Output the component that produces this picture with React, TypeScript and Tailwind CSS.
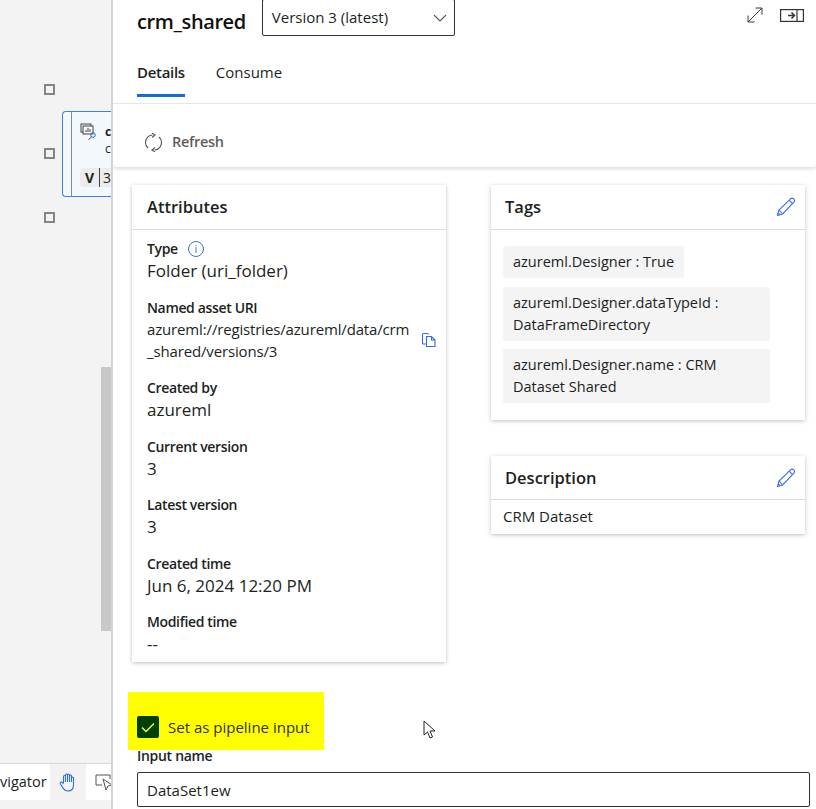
import { useState } from "react";

const font = "font-['Open_Sans','Noto_Sans',sans-serif]";

function Pencil() {
  return (
    <svg width="20" height="20" viewBox="0 0 20 20" fill="none" stroke="#3b6fe0" strokeWidth="1.1">
      <path d="M1.5 18.5 L3 13 L14.5 1.8 C15.5 1 16.8 1 17.7 1.9 C18.7 2.9 18.7 4.2 17.9 5.1 L6.6 16.9 Z" />
      <path d="M3 13 L6.6 16.9 M13.2 3.2 L16.6 6.6 M2.2 15.8 L4.2 17.8" />
    </svg>
  );
}

function Handle() {
  return <div className="w-[11px] h-[11px] border-2 border-[#858585] bg-[#f3f3f3]" />;
}

function Attr({ label, value, info }: { label: string; value: string; info?: boolean }) {
  return (
    <div className="mb-[14.5px]">
      <div className="flex items-center h-[21px] text-[14px] font-semibold text-[#201f1e] tracking-[-0.35px]">
        {label}
        {info && (
          <span className="ml-[10px] w-[16px] h-[16px] rounded-full border border-[#3b6fe0] text-[#3b6fe0] text-[11px] leading-[14px] text-center font-normal">
            i
          </span>
        )}
      </div>
      <div className="text-[17px] leading-[23px] text-[#201f1e]">{value}</div>
    </div>
  );
}

function Tag({ children }: { children: React.ReactNode }) {
  return (
    <div className="bg-[#f4f4f4] rounded-[2px] px-[10px] py-[5px] text-[14.5px] leading-[22px] text-[#201f1e]">
      {children}
    </div>
  );
}

export default function App() {
  const [checked, setChecked] = useState(true);
  const [name, setName] = useState("DataSet1ew");

  return (
    <div className={`${font} relative w-[816px] h-[809px] overflow-hidden flex bg-white`}>
      {/* canvas behind the panel */}
      <aside className="relative w-[113px] shrink-0 bg-[#f3f3f3] border-r-2 border-[#d4d4d4] overflow-hidden">
        <div className="absolute left-[44px] top-[84px]"><Handle /></div>
        <div className="absolute left-[44px] top-[148px]"><Handle /></div>
        <div className="absolute left-[44px] top-[212px]"><Handle /></div>
        <div className="absolute left-[62px] top-[111px] w-[50px] h-[86px] rounded-l-[4px] border border-r-0 border-[#3b82e8] bg-[#f3f8fd] flex overflow-hidden">
          <div className="w-[9px] shrink-0 border-r border-[#8a8a8a]" />
          <div className="min-w-0 flex-1 pl-[8px] pt-[11px]">
            <div className="flex gap-[8px] items-start">
              <svg className="shrink-0" width="17" height="17" viewBox="0 0 17 17" fill="none" stroke="#444" strokeWidth="1">
                <rect x="1" y="1" width="10" height="8" />
                <rect x="3" y="3" width="10" height="8" fill="#f3f8fd" />
                <path d="M6 9V7M8 9V5M10 9V6" />
                <circle cx="13" cy="12" r="2.3" stroke="#2a6fc9" />
                <path d="M11.500 14L8.500 16.500" />
              </svg>
              <div className="text-[12px] leading-[17px] text-[#201f1e]">
                <div className="font-bold">c</div>
                <div>c</div>
              </div>
            </div>
            <div className="mt-[11px] w-[40px] h-[19px] bg-[#ececec] rounded-l-[4px] flex items-center text-[14px] text-[#201f1e]">
              <span className="font-bold px-[5px]">V</span>
              <span className="border-l border-[#444] pl-[3px] leading-[19px]">3</span>
            </div>
          </div>
        </div>
        <div className="absolute left-[101px] top-[367px] w-[11px] h-[264px] bg-[#c8c8c8]" />
        <div className="absolute left-0 top-[763px] w-[111px] h-[37px] bg-white border-t border-[#d8d8d8] flex items-center overflow-hidden">
          <span className="w-[50px] shrink-0 text-[14.5px] text-[#201f1e]">vigator</span>
          <span className="w-[36px] h-[36px] bg-[#f3f2f1] flex items-center justify-center shrink-0">
            <svg width="18" height="20" viewBox="0 0 18 20" fill="none" stroke="#2f6fd6" strokeWidth="1.1">
              <path d="M4.5 11V4.5a1 1 0 0 1 2 0V3a1 1 0 0 1 2 0v0a1 1 0 0 1 2 0V4a1 1 0 0 1 2 0v2a1 1 0 0 1 2 0v7c0 3.5-2 6-5.5 6-2.5 0-3.8-1-5-3L1.3 11.8c-.7-1.2 1-2.300 2-1.300L4.500 12" />
              <path d="M6.500 4.500V10M8.500 3V10M10.500 3V10M12.500 4V10" />
            </svg>
          </span>
          <svg className="ml-[9px] shrink-0" width="18" height="18" viewBox="0 0 18 18" fill="none" stroke="#555" strokeWidth="1">
            <path d="M7 12H1V2h14v4" />
            <path d="M8 6l9 6-4 1-2 4z" fill="white" />
          </svg>
        </div>
      </aside>

      {/* details panel */}
      <main className="flex-1 min-w-0 flex flex-col">
        <div className="shadow-[0_2px_4px_rgba(0,0,0,0.14)] rounded-b-[4px] h-[167px] shrink-0">
          <div className="flex items-start h-[36px] pl-[24px] pr-[12px]">
            <h1 className="text-[20px] leading-[44px] font-semibold text-[#11100f] tracking-[-0.4px]">crm_shared</h1>
            <button className="ml-[16px] mt-[-1px] w-[193px] h-[37px] border border-[#323130] rounded-[2px] flex items-center justify-between pl-[9px] pr-[7px] text-[15px] text-[#201f1e]">
              Version 3 (latest)
              <svg width="14" height="8" viewBox="0 0 14 8" fill="none" stroke="#555" strokeWidth="1.1">
                <path d="M1 1l6 6 6-6" />
              </svg>
            </button>
            <div className="ml-auto flex items-center gap-[17px] mt-[7px]">
              <svg width="16" height="16" viewBox="0 0 16 16" fill="none" stroke="#3a3a3a" strokeWidth="1">
                <path d="M1 15L15 1M8.500 1H15V7.500M1 8.500V15H7.500" />
              </svg>
              <svg width="24" height="13" viewBox="0 0 24 13" fill="none" stroke="#333" strokeWidth="1.200">
                <rect x="0.600" y="0.600" width="22.800" height="11.800" />
                <path d="M17 1V12" />
                <path d="M8 6.500H14M11.500 3.500l3 3-3 3" strokeWidth="1.500" />
              </svg>
            </div>
          </div>
          <div className="flex gap-[31px] pl-[24px] h-[68px] pt-[25px] border-b border-[#e6e6e6]">
            <div className="h-[36px] border-b-[3px] border-[#0f6cdd] text-[15px] font-semibold text-[#201f1e] tracking-[-0.3px] leading-[22px]">
              Details
            </div>
            <div className="text-[15px] text-[#201f1e] leading-[22px]">Consume</div>
          </div>
          <div className="flex items-center gap-[9px] pl-[31px] mt-[24px] h-[28px] text-[14.5px] font-semibold text-[#5f5e5c] tracking-[-0.3px]">
            <svg width="19" height="19" viewBox="0 0 19 19" fill="none" stroke="#555" strokeWidth="1.100">
              <path d="M4 15A7.500 7.500 0 0 1 8.500 2M15 4A7.500 7.500 0 0 1 10.500 17" />
              <path d="M8 0l3 2-3 2.500M11 14.500L8 17l3 2" />
            </svg>
            Refresh
          </div>
        </div>

        <div className="flex items-start mt-[18px] pl-[19px]">
          <section className="w-[314px] h-[477px] shrink-0 bg-white shadow-[0_1px_4px_rgba(0,0,0,0.25)]">
            <h2 className="h-[45px] pl-[15px] pt-[1px] flex items-center border-b border-[#dcdcdc] text-[16.5px] font-semibold text-[#201f1e]">
              Attributes
            </h2>
            <div className="pl-[15px] pt-[8px]">
              <Attr label="Type" value="Folder (uri_folder)" info />
              <div className="mb-[15.5px]">
                <div className="h-[21px] flex items-center text-[14px] font-semibold text-[#201f1e] tracking-[-0.35px]">Named asset URI</div>
                <div className="flex items-center">
                  <div className="w-[266px] text-[15px] leading-[22px] text-[#201f1e] tracking-[-0.15px] break-all">
                    azureml://registries/azureml/data/crm_shared/versions/3
                  </div>
                  <svg className="ml-[8px]" width="16" height="16" viewBox="0 0 16 16" fill="none" stroke="#2f6fd6" strokeWidth="1.100">
                    <path d="M5 12H2.500a1 1 0 0 1-1-1V2.500a1 1 0 0 1 1-1H6.500a1 1 0 0 1 1 1" />
                    <path d="M5.500 4.500h5l3.500 3.500v6.500H5.500zM10.500 4.500V8H14" />
                  </svg>
                </div>
              </div>
              <Attr label="Created by" value="azureml" />
              <Attr label="Current version" value="3" />
              <Attr label="Latest version" value="3" />
              <Attr label="Created time" value="Jun 6, 2024 12:20 PM" />
              <Attr label="Modified time" value="--" />
            </div>
          </section>

          <div className="ml-[45px] w-[314px] shrink-0 flex flex-col gap-[36px]">
            <section className="h-[235px] bg-white shadow-[0_1px_4px_rgba(0,0,0,0.25)]">
              <div className="h-[45px] px-[14px] flex items-center justify-between border-b border-[#dcdcdc]">
                <h2 className="pt-[1px] text-[16.5px] font-semibold text-[#201f1e]">Tags</h2>
                <span className="mr-[-5px]"><Pencil /></span>
              </div>
              <div className="pl-[12px] pt-[16px] w-[279px] flex flex-col items-start gap-[8.5px]">
                <Tag>azureml.Designer : True</Tag>
                <Tag>azureml.Designer.dataTypeId : DataFrameDirectory</Tag>
                <Tag>azureml.Designer.name : CRM Dataset Shared</Tag>
              </div>
            </section>
            <section className="h-[78px] bg-white shadow-[0_1px_4px_rgba(0,0,0,0.25)]">
              <div className="h-[44px] px-[14px] flex items-center justify-between border-b border-[#dcdcdc]">
                <h2 className="pt-[1px] text-[16.5px] font-semibold text-[#201f1e]">Description</h2>
                <span className="mr-[-5px]"><Pencil /></span>
              </div>
              <div className="pl-[12px] text-[15px] leading-[33px] text-[#201f1e]">CRM Dataset</div>
            </section>
          </div>
        </div>

        <div className="mt-[30px] ml-[15px] w-[196px] h-[58px] bg-[#ffff00] pl-[9px] pt-[24px] shrink-0">
          <label className="flex items-center gap-[9px] text-[15px] text-[#323130]">
            <input type="checkbox" className="sr-only" checked={checked} onChange={(e) => setChecked(e.target.checked)} />
            <span className="w-[22px] h-[22px] rounded-[2px] bg-[#004000] flex items-center justify-center">
              {checked && (
                <svg width="14" height="11" viewBox="0 0 14 11" fill="none" stroke="#ffff33" strokeWidth="1.300">
                  <path d="M1 5.500l4 4 8-8" />
                </svg>
              )}
            </span>
            Set as pipeline input
          </label>
        </div>

        <div className="pl-[24px] pr-[6px] shrink-0">
          <div className="h-[22px] -mt-[6px] mb-[6px] relative flex items-center text-[14px] font-semibold text-[#201f1e] tracking-[-0.3px]">Input name</div>
          <input
            value={name}
            onChange={(e) => setName(e.target.value)}
            className="w-full h-[35px] border border-[#323130] rounded-[2px] px-[9px] text-[15px] text-[#201f1e] outline-none"
          />
        </div>
      </main>

      {/* mouse pointer in the screenshot */}
      <svg className="absolute left-[423px] top-[720px]" width="14" height="20" viewBox="0 0 14 20" fill="white" stroke="#222" strokeWidth="1">
        <path d="M1 1v14l3.500-3 2.500 6 2.500-1-2.500-6H12z" />
      </svg>
    </div>
  );
}
